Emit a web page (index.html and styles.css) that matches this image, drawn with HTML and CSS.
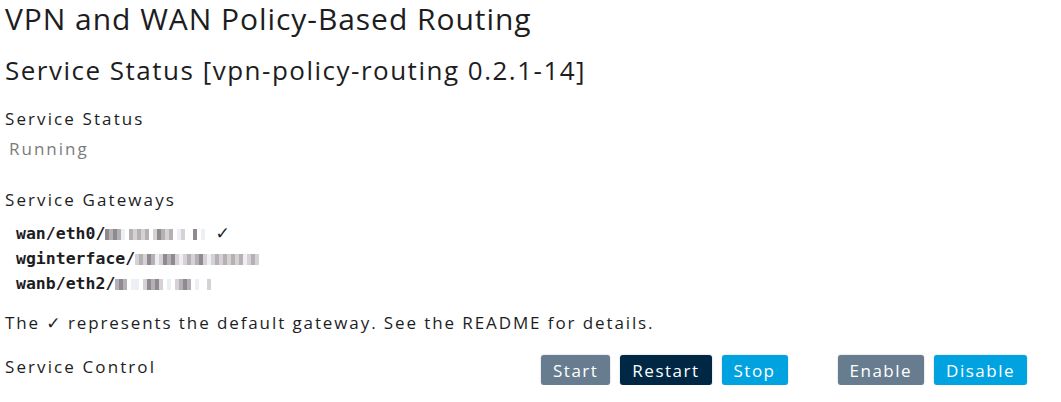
FILE: index.html
```html
<!DOCTYPE html>
<html>
<head>
<meta charset="utf-8">
<link rel="stylesheet" href="styles.css">
</head>
<body>
<div class="page">
  <h2 class="title">VPN and WAN Policy-Based Routing</h2>
  <h3 class="subtitle">Service Status [vpn-policy-routing 0.2.1-14]</h3>

  <div class="field">
    <div class="label">Service Status</div>
    <div class="value">Running</div>
  </div>

  <div class="field gateways">
    <div class="label">Service Gateways</div>
    <div class="gwlist">
      <div class="gw">wan/eth0/<span class="blur"><i class="d"></i><i class="m"></i><i class="d"></i><i class="m"></i><i class="p"></i><i class="w"></i><i class="m"></i><i class="l"></i><i class="m"></i><i class="l"></i><i class="m"></i><i class="w"></i><i class="l"></i><i class="d"></i><i class="m"></i><i class="l"></i><i class="m"></i><i class="w"></i><i class="p"></i><i class="l"></i><i class="w"></i><i class="w"></i><i class="d"></i><i class="w"></i><i class="p"></i></span> <span class="check">✓</span></div>
      <div class="gw">wginterface/<span class="blur"><i class="l"></i><i class="m"></i><i class="l"></i><i class="d"></i><i class="m"></i><i class="p"></i><i class="l"></i><i class="d"></i><i class="m"></i><i class="d"></i><i class="l"></i><i class="p"></i><i class="l"></i><i class="m"></i><i class="l"></i><i class="m"></i><i class="d"></i><i class="l"></i><i class="p"></i><i class="l"></i><i class="m"></i><i class="l"></i><i class="m"></i><i class="l"></i><i class="m"></i><i class="l"></i><i class="m"></i><i class="p"></i><i class="l"></i><i class="m"></i><i class="l"></i></span></div>
      <div class="gw">wanb/eth2/<span class="blur"><i class="m"></i><i class="d"></i><i class="m"></i><i class="w"></i><i class="p"></i><i class="p"></i><i class="w"></i><i class="l"></i><i class="d"></i><i class="m"></i><i class="d"></i><i class="l"></i><i class="w"></i><i class="p"></i><i class="w"></i><i class="l"></i><i class="m"></i><i class="d"></i><i class="m"></i><i class="w"></i><i class="p"></i><i class="w"></i><i class="w"></i><i class="l"></i></span></div>
    </div>
  </div>

  <p class="note">The <span class="tick">✓</span> represents the default gateway. See the README for details.</p>

  <div class="control">
    <div class="label ctl-label">Service Control</div>
    <div class="btns">
      <button class="btn gray">Start</button>
      <button class="btn navy">Restart</button>
      <button class="btn blue">Stop</button>
      <span class="spacer"></span>
      <button class="btn gray">Enable</button>
      <button class="btn blue">Disable</button>
    </div>
  </div>
</div>
</body>
</html>
```
FILE: styles.css
```css
* { box-sizing: border-box; }
html, body { margin: 0; padding: 0; background: #fff; }
body {
  font-family: "Open Sans", "Liberation Sans", sans-serif;
  color: #1d1d1f;
}
.page { padding: 0 5px; }
.title {
  margin: 0;
  padding-top: 1px;
  font-size: 30px;
  font-weight: 500;
  line-height: 36px;
  letter-spacing: 0.95px;
}
.subtitle {
  margin: 17px 0 0;
  font-size: 26px;
  font-weight: 500;
  line-height: 32px;
  letter-spacing: 1.5px;
}
.field { margin-top: 22px; }
.label {
  font-size: 17px;
  line-height: 22px;
  letter-spacing: 2.1px;
}
.value {
  margin-top: 8px;
  padding-left: 4px;
  font-size: 17px;
  line-height: 22px;
  letter-spacing: 2px;
  color: #7b7b7b;
}
.gateways { margin-top: 29px; }
.gwlist { margin-top: 10px; padding-left: 11px; }
.gw {
  font-family: "DejaVu Sans Mono", "Liberation Mono", monospace;
  font-weight: bold;
  font-size: 16.5px;
  line-height: 25px;
  color: #1d1d1f;
  display: flex;
  align-items: center;
}
.blur { display: inline-flex; height: 11px; margin-top: 2px; }
.blur i { display: block; width: 4px; height: 11px; }
.blur i.d { background: #8e8a90; }
.blur i.m { background: #b4b0b4; }
.blur i.l { background: #d6d2d4; }
.blur i.p { background: #eceff3; }
.blur i.w { background: #ffffff; }
.check { margin-left: 10px; font-family: "DejaVu Sans", sans-serif; font-weight: bold; font-size: 17px; }
.tick { font-family: "DejaVu Sans", sans-serif; font-weight: bold; letter-spacing: 0; margin-right: 1px; }
.note {
  margin: 16px 0 0;
  font-size: 17px;
  line-height: 22px;
  letter-spacing: 1.9px;
}
.control {
  display: flex;
  align-items: center;
  margin-top: 21px;
}
.ctl-label { width: 536px; flex: none; padding-bottom: 6px; }
.btns { display: flex; gap: 10px; align-items: center; }
.spacer { width: 30px; }
.btn {
  height: 30px;
  border: none;
  border-radius: 3px;
  padding: 0 12px;
  font-family: inherit;
  font-size: 17px;
  letter-spacing: 1.5px;
  color: #fff;
  box-shadow: 0 0 2px rgba(0,0,0,0.25);
}
.gray { background: #677d8f; }
.navy { background: #002744; }
.blue { background: #00a3df; }
```
